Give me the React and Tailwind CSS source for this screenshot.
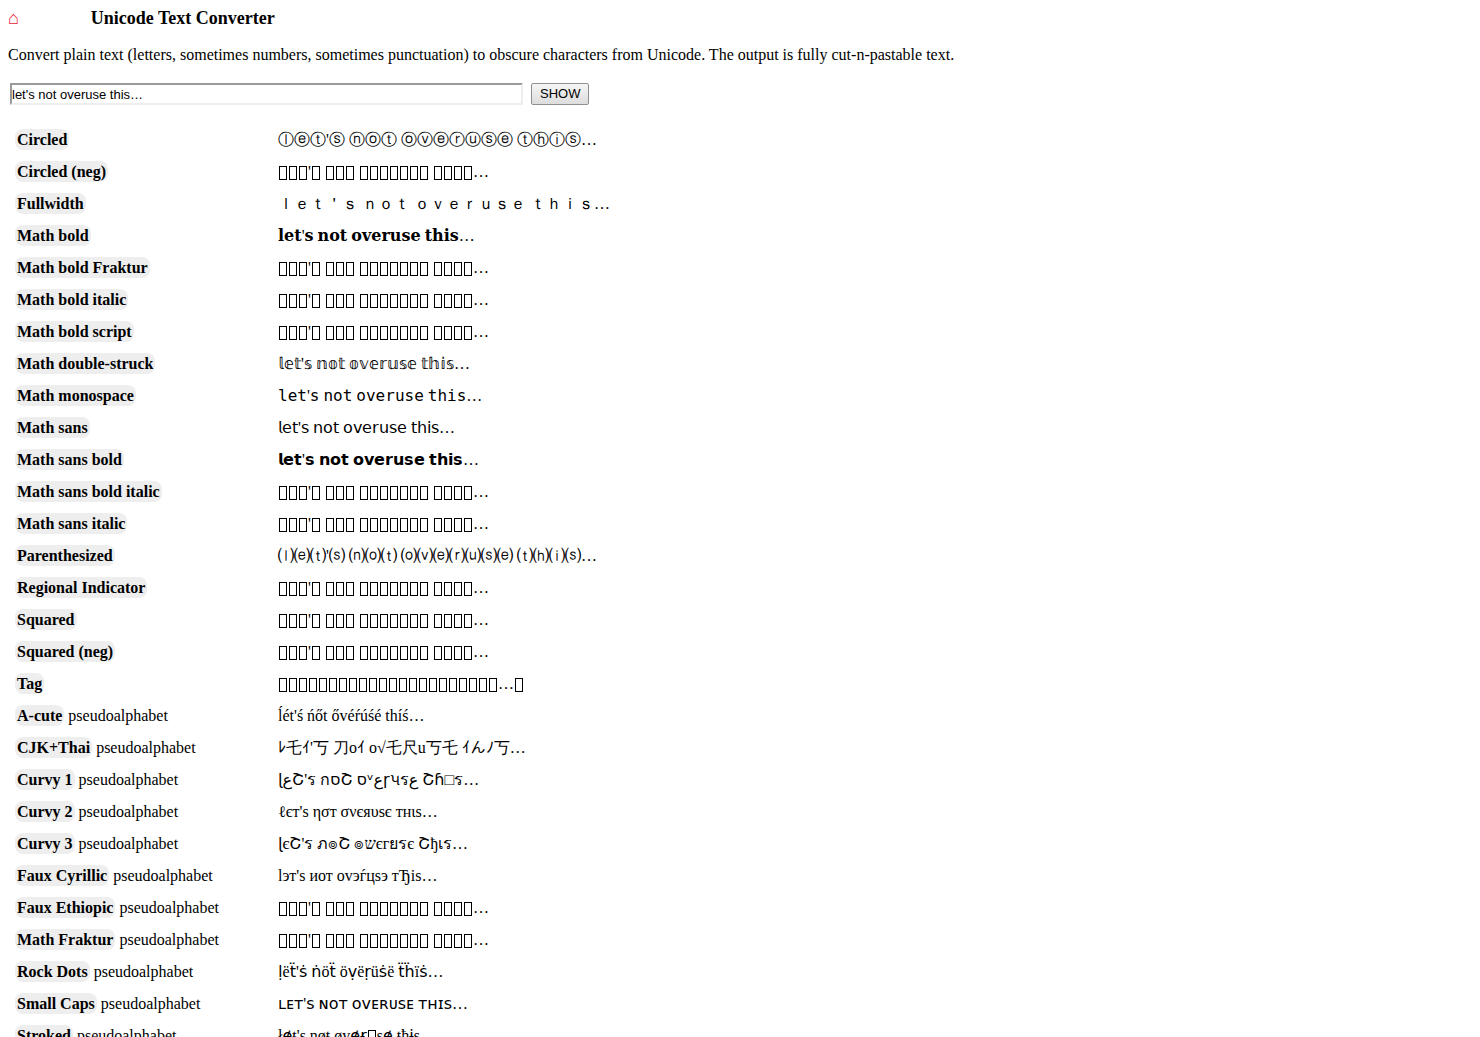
const MISSING = "\ue123";

const source = "let's not overuse this…";

const shift = (base) =>
  Array.from(source, (c) => (/[a-z]/.test(c) ? String.fromCodePoint(base + c.charCodeAt(0) - 97) : c)).join("");

const fullwidth = Array.from(source, (c) => (c === "…" || c === " " ? c : String.fromCodePoint(0xfee0 + c.charCodeAt(0)))).join("");
const missing = source.replace(/[a-z]/g, MISSING);

const serif = "font-['DejaVu_Serif'] font-bold";
const mono = "font-['DejaVu_Sans_Mono']";
const sans = "font-['DejaVu_Sans']";

const rows = [
  { name: "Circled", text: shift(0x24d0) },
  { name: "Circled (neg)", text: missing },
  { name: "Fullwidth", text: fullwidth },
  { name: "Math bold", text: shift(0x1d41a), face: serif },
  { name: "Math bold Fraktur", text: missing },
  { name: "Math bold italic", text: missing },
  { name: "Math bold script", text: missing },
  { name: "Math double-struck", text: shift(0x1d552) },
  { name: "Math monospace", text: shift(0x1d68a), face: mono },
  { name: "Math sans", text: shift(0x1d5ba) },
  { name: "Math sans bold", text: shift(0x1d5ee) },
  { name: "Math sans bold italic", text: missing },
  { name: "Math sans italic", text: missing },
  { name: "Parenthesized", text: shift(0x249c) },
  { name: "Regional Indicator", text: missing },
  { name: "Squared", text: missing },
  { name: "Squared (neg)", text: missing },
  { name: "Tag", text: MISSING.repeat(22) + "…" + MISSING },
  { name: "A-cute", text: "ĺét'ś ńőt ővéŕúśé thíś…", pseudo: true },
  { name: "CJK+Thai", text: "ﾚ乇ｲ'丂 刀oｲ o√乇尺u丂乇 ｲんﾉ丂…", pseudo: true },
  { name: "Curvy 1", text: "ɭﻉՇ'ร กסՇ סᵛﻉɼપรﻉ Շɦ□ร…", pseudo: true },
  { name: "Curvy 2", text: "ℓєт's ησт σνєяυѕє тнιѕ…", pseudo: true },
  { name: "Curvy 3", text: "ɭєՇ'ร ภ๏Շ ๏שєгยรє Շђเร…", pseudo: true },
  { name: "Faux Cyrillic", text: "lэт's иот ovэѓцsэ тЂis…", pseudo: true },
  { name: "Faux Ethiopic", text: missing, pseudo: true },
  { name: "Math Fraktur", text: missing, pseudo: true },
  { name: "Rock Dots", text: "ḷëẗ'ṡ ṅöẗ öṿëṛüṡë ẗḧïṡ…", pseudo: true },
  { name: "Small Caps", text: "ʟᴇᴛ'ꜱ ɴᴏᴛ ᴏᴠᴇʀᴜꜱᴇ ᴛʜɪꜱ…", pseudo: true },
  { name: "Stroked", text: "łɇŧ's nøŧ øvɇɍ" + MISSING + "sɇ ŧħɨs…", pseudo: true },
];

const wideGlyphs = /([ɭﻉՇסᵛɼɦḷẗṡṅṿṛḧʟᴇᴛꜱɴᴏᴠʀᴜʜɪɇɍɨ]+|\ue123)/u;
const mathGlyphs = /([\u{1d400}-\u{1d7ff}]+)/u;

function MissingGlyph() {
  return <span className="mx-px inline-block h-[14px] w-2 border border-black align-[-3px]" />;
}

function Converted({ text, face }) {
  return text.split(face ? mathGlyphs : wideGlyphs).map((part, i) => {
    if (part === MISSING) return <MissingGlyph key={i} />;
    if (i % 2 === 0) return part;
    return (
      <span key={i} className={face || sans}>
        {part}
      </span>
    );
  });
}

export default function App() {
  return (
    <main className="p-2 font-['Liberation_Serif',serif] text-base leading-5 text-black">
      <header className="flex items-center gap-[72px] text-lg leading-5">
        <a href="#home" aria-label="Home" className="text-[#ee2233]">⌂</a>
        <h1 className="font-bold">Unicode Text Converter</h1>
      </header>
      <p className="mt-[17px]">
        Convert plain text (letters, sometimes numbers, sometimes punctuation) to obscure characters from Unicode. The output is fully cut-n-pastable text.
      </p>
      <form className="mt-[18px] flex gap-2 pl-0.5 font-['Liberation_Sans',sans-serif] text-[13px]" onSubmit={(e) => e.preventDefault()}>
        <input
          type="text"
          aria-label="Text to convert"
          defaultValue={source}
          className="h-[22px] w-[513px] border-2 border-t-[#9a9a9a] border-r-[#eee] border-b-[#eee] border-l-[#9a9a9a] bg-white"
        />
        <button type="submit" className="h-[22px] rounded-xs border border-[#8f8f8f] bg-linear-to-b from-[#f6f6f6] to-[#dddddd] px-2 leading-5">
          SHOW
        </button>
      </form>
      <table className="mt-[19px] border-collapse">
        <tbody>
          {rows.map(({ name, text, face, pseudo }) => (
            <tr key={name}>
              <th scope="row" className="h-8 w-[270px] p-0 pl-[7px] text-left align-middle font-normal whitespace-nowrap">
                <span className="rounded-lg bg-[#eee] px-0.5 py-0.5 font-bold">{name}</span>
                {pseudo && " pseudoalphabet"}
              </th>
              <td className="h-8 p-0 align-middle leading-5 whitespace-nowrap [unicode-bidi:bidi-override]">
                <Converted text={text} face={face} />
              </td>
            </tr>
          ))}
        </tbody>
      </table>
    </main>
  );
}
